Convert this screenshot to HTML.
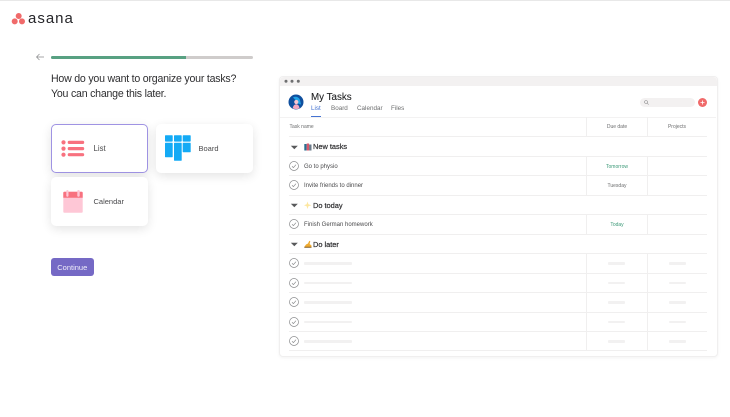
<!DOCTYPE html>
<html lang="en">
<head>
<meta charset="utf-8">
<title>Asana</title>
<style>
html,body{margin:0;padding:0;background:#fff}
#p{position:relative;width:730px;height:417px;overflow:hidden;background:#fff;font-family:"Liberation Sans",sans-serif;color:#2e2e30;filter:blur(.35px)}
#p div,#p svg,#p span{position:absolute}
.t{white-space:nowrap;line-height:1}
.card{background:#fff;border-radius:5px;box-shadow:0 3px 10px rgba(0,0,0,.11)}
.h{height:1px;left:289px;width:418px;background:#f0efef}
.v{width:1px;background:#f0efef}
.bar{height:2.5px;background:#f2f1f1;border-radius:1px}
.tab{font-size:6.3px;color:#6d6e6f;top:106px}
.sec{font-size:7.4px;color:#2e2e30;left:313px;-webkit-text-stroke:.2px #2e2e30}
.task{font-size:6px;color:#4a4a4c;left:304px}
.th{font-size:5px;color:#6d6e6f;top:125px}
.due{font-size:5px;text-align:center;width:60px;left:587px}
.hd{left:51px;font-size:10.6px;letter-spacing:-.22px;color:#2e2e30}
</style>
</head>
<body>
<div id="p">
<div style="left:0;top:0;width:730px;height:1px;background:#e8e8e8"></div>

<svg style="left:11px;top:12px" width="16" height="14" viewBox="0 0 16 14"><circle cx="7.7" cy="4" r="3" fill="#f06a6a"/><circle cx="3.7" cy="9.4" r="3" fill="#f06a6a"/><circle cx="11" cy="9.4" r="3" fill="#f06a6a"/></svg>
<div class="t" style="left:28px;top:10.500px;font-size:15px;letter-spacing:1px;color:#26262a">asana</div>

<svg style="left:35px;top:52px" width="10" height="10" viewBox="0 0 10 10"><path d="M9 5H1.500M4.500 2 1.500 5l3 3" fill="none" stroke="#8a8b8d" stroke-width=".7"/></svg>
<div style="left:51px;top:55.500px;width:202px;height:3.500px;background:#cfcccb;border-radius:2px"></div>
<div style="left:51px;top:55.500px;width:135px;height:3.500px;background:#58a182;border-radius:2px 0 0 2px"></div>

<div class="t hd" style="top:73.700px">How do you want to organize your tasks?</div>
<div class="t hd" style="top:88.700px">You can change this later.</div>

<div class="card" style="left:51px;top:124px;width:94.500px;height:46.500px;border:1.200px solid #9f93e3"></div>
<svg style="left:60px;top:139px" width="26" height="19" viewBox="0 0 26 19"><g fill="#f8717f"><circle cx="3.500" cy="3.400" r="2.100"/><circle cx="3.500" cy="9.600" r="2.100"/><circle cx="3.500" cy="15.700" r="2.100"/><rect x="7.700" y="1.800" width="16.500" height="3.200" rx="1.500"/><rect x="7.700" y="8" width="16.500" height="3.200" rx="1.500"/><rect x="7.700" y="14.100" width="16.500" height="3.200" rx="1.500"/></g></svg>
<div class="t" style="left:93.500px;top:144.500px;font-size:7.800px;color:#4a4a4c">List</div>

<div class="card" style="left:156px;top:124px;width:97px;height:49px"></div>
<svg style="left:165px;top:135px" width="26" height="27" viewBox="0 0 26 27"><g fill="#14aaf5"><rect x="0" y=".3" width="7.700" height="6.300" rx=".7"/><rect x="9" y=".3" width="7.700" height="6.300" rx=".7"/><rect x="17.700" y=".3" width="8" height="6.300" rx=".7"/><rect x="0" y="7.800" width="7.700" height="14.500" rx=".7"/><rect x="9" y="7.800" width="7.700" height="18" rx=".7"/><rect x="17.700" y="7.800" width="8" height="9.500" rx=".7"/></g></svg>
<div class="t" style="left:198.500px;top:144.500px;font-size:7.500px;color:#4a4a4c">Board</div>

<div class="card" style="left:51px;top:177px;width:97px;height:48.500px"></div>
<svg style="left:62px;top:189px" width="22" height="25" viewBox="0 0 22 25"><rect x="1.300" y="2.700" width="19.400" height="21" rx="1" fill="#fec7d6"/><path d="M1.300 3.700a1 1 0 0 1 1-1h17.400a1 1 0 0 1 1 1v5h-19.400z" fill="#f8717f"/><rect x="4.300" y="1" width="2.200" height="6.700" rx="1" fill="#fec7d6"/><rect x="15.300" y="1" width="2.400" height="6.700" rx="1" fill="#fec7d6"/></svg>
<div class="t" style="left:93.500px;top:197.500px;font-size:7.500px;color:#4a4a4c">Calendar</div>

<div style="left:51px;top:258px;width:42.500px;height:18px;background:#7569c5;border-radius:3px"></div>
<div class="t" style="left:51px;top:263.500px;width:42.500px;text-align:center;font-size:7.500px;color:#f2f0fb">Continue</div>

<div style="left:279px;top:76px;width:436.800px;height:279px;border:1px solid #f0efef;border-radius:4px;box-shadow:0 1px 3px rgba(0,0,0,.05);background:#fff"></div>
<div style="left:280px;top:77px;width:436.800px;height:8.800px;background:#f3f1f1;border-radius:4px 4px 0 0"></div>
<svg style="left:283px;top:79px" width="20" height="5" viewBox="0 0 20 5"><g fill="#6f7071"><circle cx="3" cy="2.300" r="1.500"/><circle cx="9" cy="2.300" r="1.500"/><circle cx="15.300" cy="2.300" r="1.500"/></g></svg>

<svg style="left:288px;top:93.500px" width="16" height="16" viewBox="0 0 16 16"><circle cx="8" cy="8" r="7.500" fill="#0f4f9e"/><path d="M5 3.500c2.500-1.500 6-.5 7 2.500l1 4.500-3.500-1-1-2.500z" fill="#1fa3e8"/><circle cx="8.300" cy="8" r="2.100" fill="#f9c6d2"/><path d="M4.800 14.300c.3-2.600 1.600-3.900 3.400-3.900s3 1.300 3.300 3.800c-2 1.100-4.700 1.200-6.700.1z" fill="#f5a8c0"/></svg>
<div class="t" style="left:311px;top:92.700px;font-size:9.800px;color:#1e1f21;-webkit-text-stroke:.1px #1e1f21">My Tasks</div>
<div class="t tab" style="left:311px;color:#4573d2">List</div>
<div class="t tab" style="left:331px">Board</div>
<div class="t tab" style="left:357px">Calendar</div>
<div class="t tab" style="left:391px">Files</div>
<div style="left:311px;top:115.500px;width:10px;height:1.200px;background:#4573d2"></div>

<div style="left:640px;top:97.500px;width:55px;height:9px;background:#f3f1f1;border-radius:4.500px"></div>
<svg style="left:644px;top:100px" width="5" height="5" viewBox="0 0 5 5"><circle cx="2" cy="2" r="1.500" fill="none" stroke="#8a8a8c" stroke-width=".6"/><path d="M3.200 3.200 4.600 4.600" stroke="#8a8a8c" stroke-width=".6"/></svg>
<svg style="left:698px;top:97.500px" width="9" height="9" viewBox="0 0 9 9"><circle cx="4.500" cy="4.500" r="4.500" fill="#f06a6a"/><path d="M4.500 2.500v4M2.500 4.500h4" stroke="#fff" stroke-width=".8"/></svg>

<div class="h" style="left:280px;width:436px;top:116.500px;background:#f3f2f2"></div>
<div class="h" style="top:136px"></div>
<div class="h" style="top:156px"></div>
<div class="h" style="top:175px"></div>
<div class="h" style="top:195px"></div>
<div class="h" style="top:214px"></div>
<div class="h" style="top:234px"></div>
<div class="h" style="top:253px"></div>
<div class="h" style="top:272.500px"></div>
<div class="h" style="top:292px"></div>
<div class="h" style="top:311.500px"></div>
<div class="h" style="top:331px"></div>
<div class="h" style="top:350px"></div>

<div class="v" style="left:586px;top:117px;height:19px"></div>
<div class="v" style="left:647px;top:117px;height:19px"></div>
<div class="v" style="left:586px;top:156px;height:39px"></div>
<div class="v" style="left:647px;top:156px;height:39px"></div>
<div class="v" style="left:586px;top:214px;height:20px"></div>
<div class="v" style="left:647px;top:214px;height:20px"></div>
<div class="v" style="left:586px;top:253px;height:97px"></div>
<div class="v" style="left:647px;top:253px;height:97px"></div>

<div class="t th" style="left:289.500px">Task name</div>
<div class="t th" style="left:587px;width:60px;text-align:center">Due date</div>
<div class="t th" style="left:647px;width:60px;text-align:center">Projects</div>

<svg style="left:290px;top:144.500px" width="9" height="5" viewBox="0 0 9 5"><path d="M.8.800h7L4.300 4.300z" fill="#58595b"/></svg>
<svg style="left:304px;top:142.500px" width="8" height="8" viewBox="0 0 8 8"><rect x=".3" y="1" width="2.400" height="6.500" fill="#2a6f8f"/><rect x="2.700" y=".5" width="2.400" height="7" fill="#d9576b"/><rect x="5.100" y="1.500" width="2.400" height="6" fill="#6a7a8a"/></svg>
<div class="t sec" style="top:143.200px">New tasks</div>

<svg style="left:290px;top:203px" width="9" height="5" viewBox="0 0 9 5"><path d="M.8.800h7L4.300 4.300z" fill="#58595b"/></svg>
<svg style="left:304px;top:201px" width="8" height="8" viewBox="0 0 8 8"><path d="M3.500 .5l.9 2.700L7.500 4.300 4.400 5.300 3.500 8 2.600 5.300 0 4.300l2.600-1.100z" fill="#fde7a0"/></svg>
<div class="t sec" style="top:201.700px">Do today</div>

<svg style="left:290px;top:242px" width="9" height="5" viewBox="0 0 9 5"><path d="M.8.800h7L4.300 4.300z" fill="#58595b"/></svg>
<svg style="left:304px;top:240px" width="8" height="8" viewBox="0 0 8 8"><path d="M.3 7 2 4.500l2-1L5.300 .8l1 .6L5.600 4l1.900 1.500V7z" fill="#eeaa30"/><path d="M.3 6.800h7.200v.9H.3z" fill="#7a5216"/></svg>
<div class="t sec" style="top:240.700px">Do later</div>

<div class="t task" style="top:163.800px">Go to physio</div>
<div class="t task" style="top:183px">Invite friends to dinner</div>
<div class="t task" style="top:222px">Finish German homework</div>
<div class="t due" style="top:164.500px;color:#3d9a78">Tomorrow</div>
<div class="t due" style="top:183.500px;color:#6d6e6f">Tuesday</div>
<div class="t due" style="top:222.500px;color:#3d9a78">Today</div>

<svg style="left:289px;top:161px" width="10" height="10" viewBox="0 0 10 10"><circle cx="5" cy="5" r="4.500" fill="none" stroke="#8a8b8d" stroke-width=".7"/><path d="M3 5.200 4.400 6.600 7 3.700" fill="none" stroke="#8a8b8d" stroke-width=".7"/></svg>
<svg style="left:289px;top:180px" width="10" height="10" viewBox="0 0 10 10"><circle cx="5" cy="5" r="4.500" fill="none" stroke="#8a8b8d" stroke-width=".7"/><path d="M3 5.200 4.400 6.600 7 3.700" fill="none" stroke="#8a8b8d" stroke-width=".7"/></svg>
<svg style="left:289px;top:219px" width="10" height="10" viewBox="0 0 10 10"><circle cx="5" cy="5" r="4.500" fill="none" stroke="#8a8b8d" stroke-width=".7"/><path d="M3 5.200 4.400 6.600 7 3.700" fill="none" stroke="#8a8b8d" stroke-width=".7"/></svg>
<svg style="left:289px;top:258px" width="10" height="10" viewBox="0 0 10 10"><circle cx="5" cy="5" r="4.500" fill="none" stroke="#8a8b8d" stroke-width=".7"/><path d="M3 5.200 4.400 6.600 7 3.700" fill="none" stroke="#8a8b8d" stroke-width=".7"/></svg>
<svg style="left:289px;top:277.500px" width="10" height="10" viewBox="0 0 10 10"><circle cx="5" cy="5" r="4.500" fill="none" stroke="#8a8b8d" stroke-width=".7"/><path d="M3 5.200 4.400 6.600 7 3.700" fill="none" stroke="#8a8b8d" stroke-width=".7"/></svg>
<svg style="left:289px;top:297px" width="10" height="10" viewBox="0 0 10 10"><circle cx="5" cy="5" r="4.500" fill="none" stroke="#8a8b8d" stroke-width=".7"/><path d="M3 5.200 4.400 6.600 7 3.700" fill="none" stroke="#8a8b8d" stroke-width=".7"/></svg>
<svg style="left:289px;top:316.500px" width="10" height="10" viewBox="0 0 10 10"><circle cx="5" cy="5" r="4.500" fill="none" stroke="#8a8b8d" stroke-width=".7"/><path d="M3 5.200 4.400 6.600 7 3.700" fill="none" stroke="#8a8b8d" stroke-width=".7"/></svg>
<svg style="left:289px;top:336px" width="10" height="10" viewBox="0 0 10 10"><circle cx="5" cy="5" r="4.500" fill="none" stroke="#8a8b8d" stroke-width=".7"/><path d="M3 5.200 4.400 6.600 7 3.700" fill="none" stroke="#8a8b8d" stroke-width=".7"/></svg>

<div class="bar" style="left:304px;top:262px;width:48px"></div>
<div class="bar" style="left:304px;top:281.500px;width:48px"></div>
<div class="bar" style="left:304px;top:301px;width:48px"></div>
<div class="bar" style="left:304px;top:320.500px;width:48px"></div>
<div class="bar" style="left:304px;top:340px;width:48px"></div>
<div class="bar" style="left:608px;top:262px;width:17px"></div>
<div class="bar" style="left:608px;top:281.500px;width:17px"></div>
<div class="bar" style="left:608px;top:301px;width:17px"></div>
<div class="bar" style="left:608px;top:320.500px;width:17px"></div>
<div class="bar" style="left:608px;top:340px;width:17px"></div>
<div class="bar" style="left:669px;top:262px;width:17px"></div>
<div class="bar" style="left:669px;top:281.500px;width:17px"></div>
<div class="bar" style="left:669px;top:301px;width:17px"></div>
<div class="bar" style="left:669px;top:320.500px;width:17px"></div>
<div class="bar" style="left:669px;top:340px;width:17px"></div>
</div>
</body>
</html>
